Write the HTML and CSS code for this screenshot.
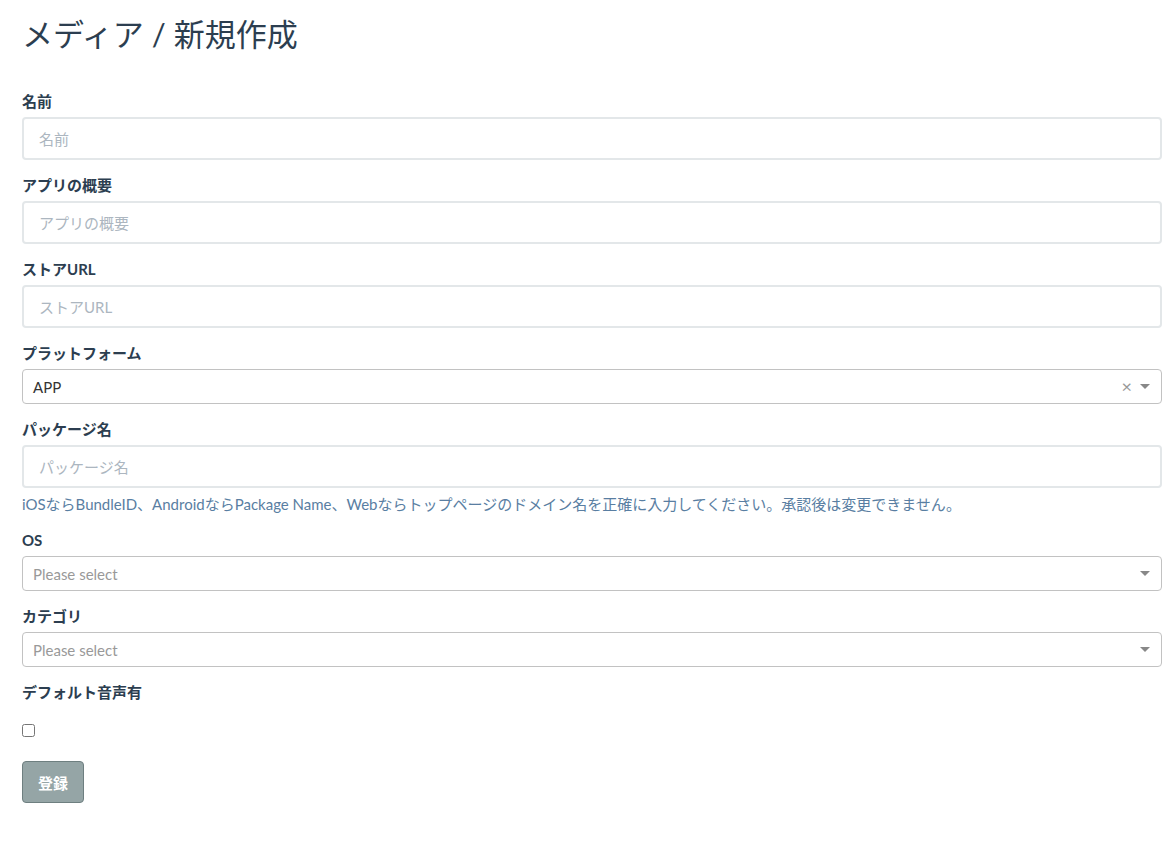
FILE: index.html
```html
<!DOCTYPE html>
<html lang="ja">
<head>
<meta charset="utf-8">
<title>メディア / 新規作成</title>
<link rel="stylesheet" href="styles.css">
</head>
<body>
<div class="container">
  <h1 class="page-title">メディア / 新規作成</h1>
  <form class="form">
    <div class="form-group">
      <label class="form-label">名前</label>
      <input class="form-control" type="text" placeholder="名前">
    </div>
    <div class="form-group">
      <label class="form-label">アプリの概要</label>
      <input class="form-control" type="text" placeholder="アプリの概要">
    </div>
    <div class="form-group">
      <label class="form-label">ストアURL</label>
      <input class="form-control" type="text" placeholder="ストアURL">
    </div>
    <div class="form-group">
      <label class="form-label">プラットフォーム</label>
      <div class="select">
        <span class="select-value">APP</span>
        <span class="select-clear">×</span>
        <span class="select-arrow"></span>
      </div>
    </div>
    <div class="form-group">
      <label class="form-label">パッケージ名</label>
      <input class="form-control" type="text" placeholder="パッケージ名">
      <p class="help-block">iOSならBundleID、AndroidならPackage Name、Webならトップページのドメイン名を正確に入力してください。承認後は変更できません。</p>
    </div>
    <div class="form-group">
      <label class="form-label">OS</label>
      <div class="select">
        <span class="select-placeholder">Please select</span>
        <span class="select-arrow"></span>
      </div>
    </div>
    <div class="form-group">
      <label class="form-label">カテゴリ</label>
      <div class="select">
        <span class="select-placeholder">Please select</span>
        <span class="select-arrow"></span>
      </div>
    </div>
    <div class="form-group check-group">
      <label class="form-label">デフォルト音声有</label>
      <div class="check-wrap"><input class="check" type="checkbox"></div>
    </div>
    <button class="btn" type="button">登録</button>
  </form>
</div>
</body>
</html>
```
FILE: styles.css
```css
* { box-sizing: border-box; }
body {
  margin: 0;
  background: #fff;
  font-family: Lato, "Noto Sans CJK JP", sans-serif;
  color: #2c3e50;
}
.container {
  padding: 17px 12px 0 22px;
}
.page-title {
  margin: 0 0 40px;
  font-size: 31px;
  line-height: 34px;
  font-weight: 400;
  color: #2c3e50;
}
.form-group {
  margin-bottom: 15px;
}
.form-label {
  display: block;
  font-size: 15px;
  font-weight: 700;
  line-height: 20px;
  margin-bottom: 6px;
  color: #2c3e50;
}
.form-control {
  display: block;
  width: 100%;
  height: 43px;
  padding: 0 15px;
  border: 2px solid #e3e7e9;
  border-radius: 4px;
  font-family: inherit;
  font-size: 15px;
  color: #2c3e50;
  background: #fff;
  outline: none;
}
.form-control::placeholder {
  color: #acb6c0;
}
.select {
  display: flex;
  align-items: center;
  height: 35px;
  padding: 0 11px 0 10px;
  border: 1px solid #c2c2c2;
  border-radius: 4px;
  font-size: 15px;
}
.select-value {
  flex: 1;
  color: #333;
}
.select-placeholder {
  flex: 1;
  color: #999;
}
.select-clear {
  color: #999;
  font-size: 18px;
  line-height: 1;
  margin-right: 8px;
  margin-top: -2px;
}
.select-arrow {
  width: 0;
  height: 0;
  border-left: 5px solid transparent;
  border-right: 5px solid transparent;
  border-top: 5px solid #888;
}
.help-block {
  margin: 6px 0 16px;
  font-size: 15px;
  line-height: 20px;
  color: #597ea2;
}
.check-wrap {
  padding-top: 16px;
  height: 29px;
  display: flex;
}
.check {
  margin: 0;
  width: 13px;
  height: 13px;
}
.check-group {
  margin-bottom: 24px;
}
.btn {
  display: block;
  width: 62px;
  height: 42px;
  padding: 0;
  border: 1px solid #6e7f80;
  border-radius: 4px;
  background: #95a5a6;
  color: #fff;
  font-family: inherit;
  font-size: 15px;
  font-weight: 700;
}
```
